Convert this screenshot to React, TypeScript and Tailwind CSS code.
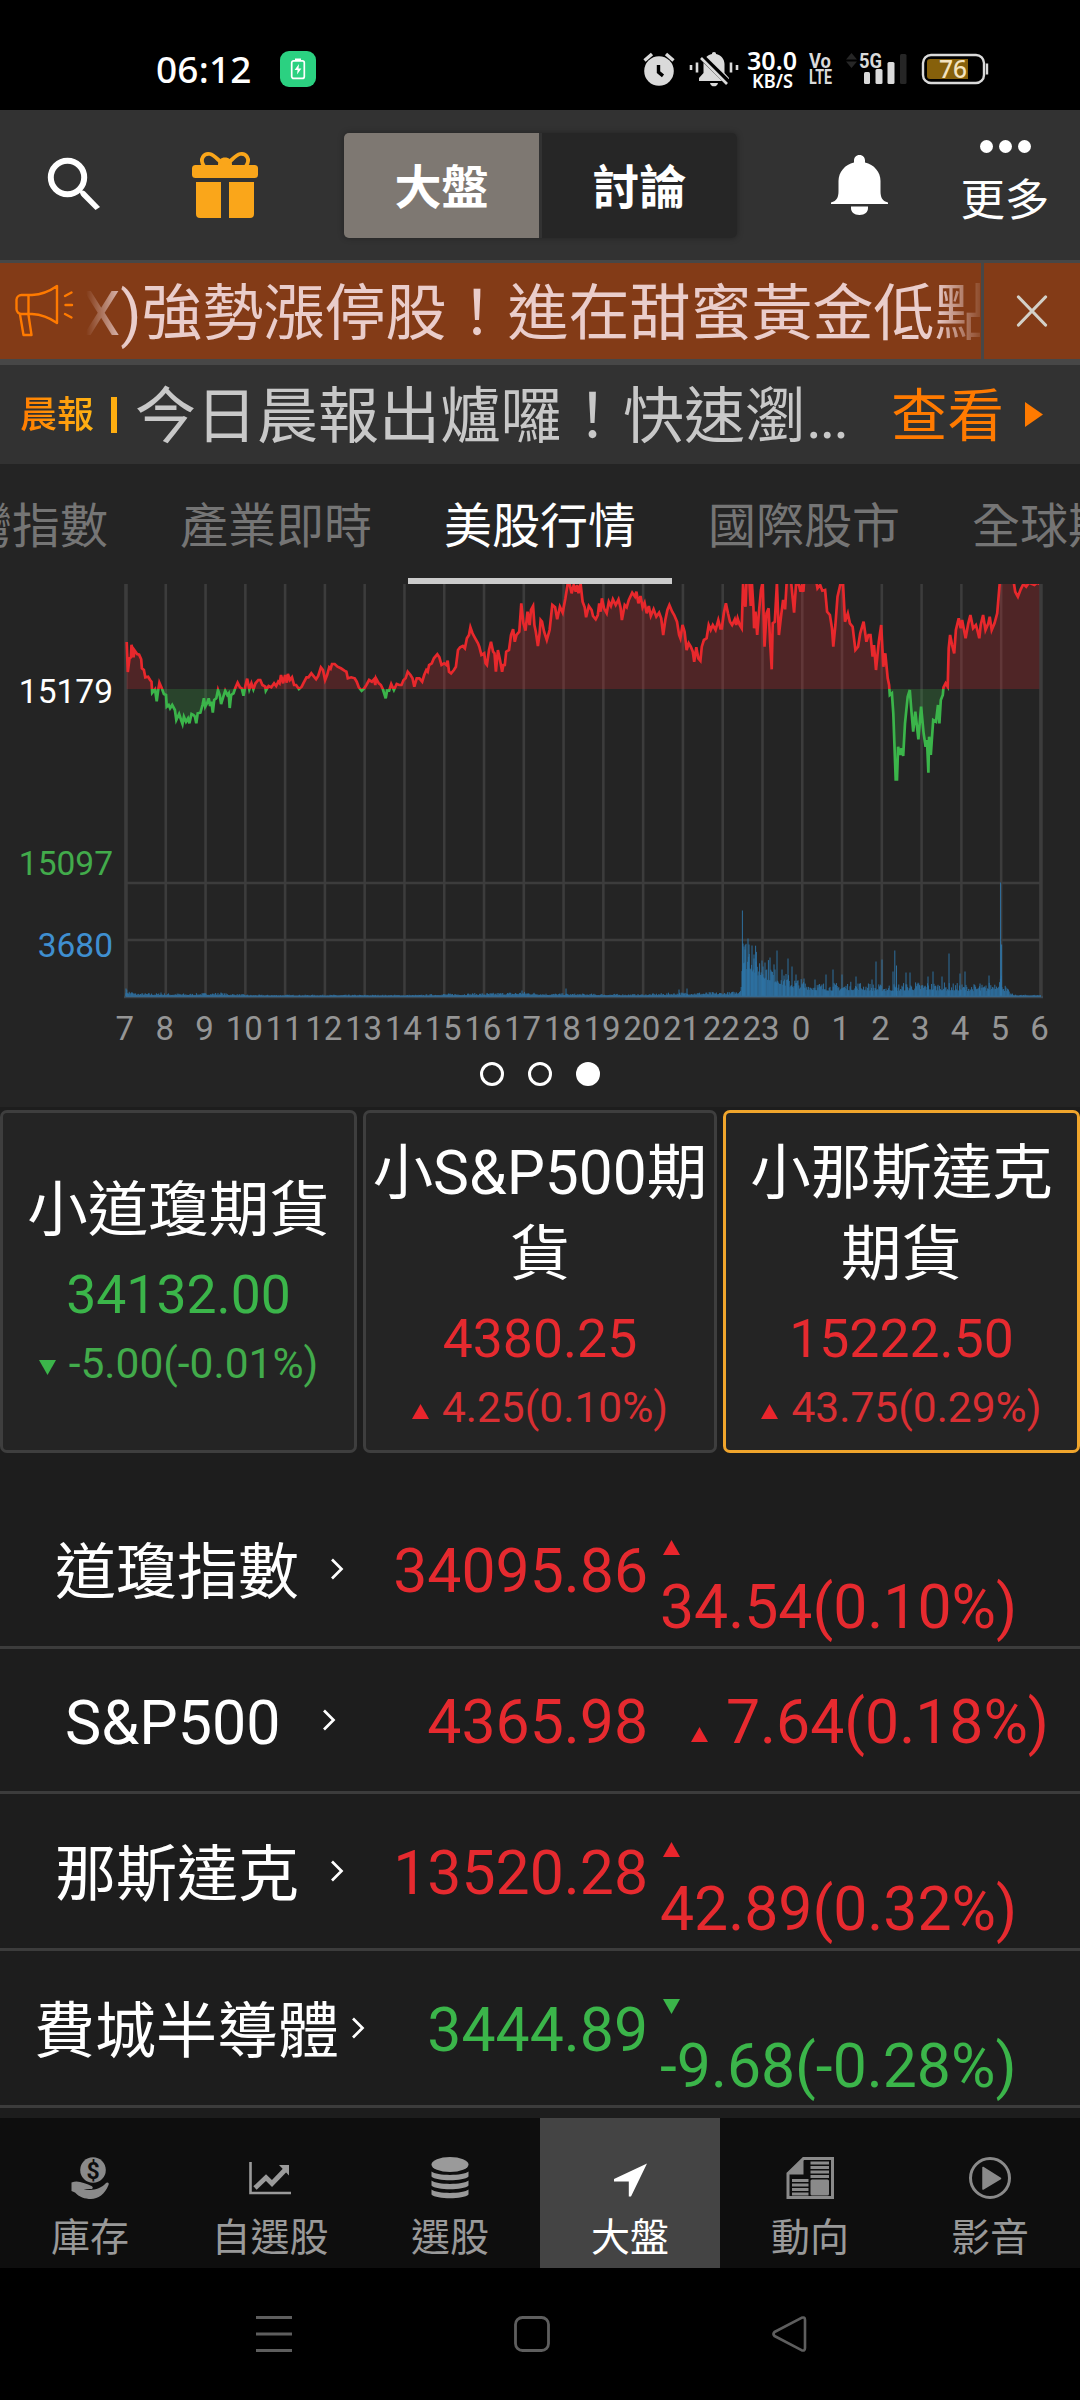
import React from "react";

type Dir = "up" | "down";

/* Price samples: alternating x, y on a fine grid (2.904 units per px across, 3 per px down). */
const PRICE_DAY =
  "368,216 371,306 376,265 380,262 382,224 388,262 390,240 398,252 404,254 410,268 412,295 418,300 422,322 430,320 436,330 440,335 442,368 450,358 455,394 459,362 463,338 470,355 476,372 482,375 484,410 490,405 494,415 500,405 508,420 512,450 520,432 526,450 530,462 534,440 540,455 546,445 550,460 556,432 562,435 566,440 570,460 574,430 582,428 588,405 592,385 596,410 602,398 606,385 610,408 614,395 618,428 622,390 628,385 633,360 638,375 642,402 648,382 654,362 660,375 664,370 667,414 671,375 678,370 683,355 690,338 697,352 702,355 707,377 712,350 718,326 724,358 730,340 736,358 742,340 750,330 756,330 762,345 770,350 772,362 780,348 788,352 796,340 802,348 808,335 812,340 816,315 822,340 828,315 833,338 836,312 842,330 848,322 854,345 860,345 868,357 876,350 882,338 890,322 896,322 904,310 912,320 918,328 924,318 932,292 938,300 944,330 950,315 956,292 960,296 964,282 972,282 980,290 990,295 1000,302 1006,305 1010,325 1020,322 1030,325 1036,335 1042,352 1050,362 1058,355 1064,345 1072,330 1080,335 1086,328 1090,345 1092,325 1100,340 1106,345 1112,358 1120,385 1124,362 1130,362 1136,342 1144,360 1152,342 1160,345 1166,345 1172,330 1178,325 1184,305 1192,315 1198,325 1203,350 1210,325 1218,325 1226,335 1232,315 1238,300 1242,305 1246,285 1254,280 1260,265 1270,253 1276,262 1282,285 1290,280 1296,285 1300,272 1304,305 1310,310 1318,300 1324,290 1330,240 1336,232 1344,228 1350,235 1356,205 1362,195 1366,172 1372,190 1380,205 1388,220 1392,230 1398,255 1406,250 1410,280 1414,285 1420,240 1426,215 1432,245 1436,250 1440,305 1446,240 1452,270 1458,305 1462,285 1466,285 1470,245 1478,240 1484,195 1490,178 1495,215 1500,195 1508,185 1514,100 1520,160 1526,182 1532,125 1538,165 1542,120 1548,108 1552,165 1556,185 1562,228 1567,190";
const PRICE_NIGHT =
  "2,150 6,155 12,185 20,210 28,180 36,105 44,112 50,148 58,110 66,128 74,85 80,45 86,42 92,70 98,45 104,65 108,45 112,70 118,42 124,95 130,112 134,142 142,108 150,120 154,138 162,148 168,135 172,100 176,125 180,85 186,115 194,130 200,95 206,108 212,88 220,105 228,88 234,112 238,150 246,105 252,112 258,90 268,68 276,80 280,65 286,100 292,78 298,112 304,98 310,130 316,108 322,138 330,118 338,140 346,128 352,145 358,195 364,150 370,120 376,105 384,125 390,135 398,155 404,195 408,205 414,165 420,185 426,240 432,220 438,230 444,245 448,275 454,232 460,265 466,272 470,230 476,210 484,205 490,165 496,180 502,165 510,180 518,150 524,175 528,175 534,130 540,100 546,130 552,155 558,165 566,148 570,165 574,145 580,165 586,175 590,40 593,95 597,110 600,25 608,30 612,108 615,30 620,110 622,175 626,125 631,195 636,125 642,60 647,35 652,230 658,130 664,115 668,210 673,298 676,160 682,155 688,40 694,195 700,140 706,90 712,118 717,30 724,30 730,42 738,128 744,40 752,45 757,65 760,50 765,65 768,20 800,20 806,55 814,45 820,62 828,60 834,125 842,135 848,175 852,230 858,165 864,80 872,45 880,40 886,155 894,130 900,160 908,170 916,240 924,230 930,190 940,155 948,215 954,195 960,195 966,260 970,225 976,300 984,215 991,165 997,290 1003,250 1010,325 1014,345 1016,375 1022,370 1026,430 1033,628 1037,628 1040,530 1046,555 1050,535 1055,558 1060,460 1068,380 1074,360 1078,415 1084,485 1090,425 1099,508 1107,410 1114,490 1120,530 1124,510 1128,608 1130,500 1135,555 1142,450 1150,455 1156,405 1160,460 1164,390 1170,375 1172,352 1178,340 1184,350 1187,235 1191,195 1197,225 1203,250 1208,180 1216,145 1222,175 1226,150 1236,205 1244,160 1250,135 1258,175 1266,165 1270,180 1276,205 1280,165 1287,135 1294,180 1302,160 1306,140 1312,180 1320,160 1328,130 1336,30 1375,30 1380,65 1388,80 1396,58 1404,42 1412,50 1420,38 1436,45 1444,38 1450,42";

const parse = (s: string, shift: number) =>
  s.split(" ").map((p) => {
    const [x, y] = p.split(",").map(Number);
    return [(x + shift) / 2.904, y / 3 - 14] as [number, number];
  });
const points = [...parse(PRICE_DAY, 0), ...parse(PRICE_NIGHT, 1568)];
const linePath = "M" + points.map(([x, y]) => `${x.toFixed(1)} ${y.toFixed(1)}`).join("L");
const BASE = 105;
const areaPath = `${linePath}L${points[points.length - 1][0].toFixed(1)} ${BASE}L${points[0][0].toFixed(1)} ${BASE}Z`;

/* Volume: typical height at a given x, plus single tall minutes. */
const LEVEL: [number, number][] = [
  [126, 5], [136, 2.4], [190, 2], [215, 2.6], [250, 1.2], [420, 1.2], [445, 2], [490, 2.4], [525, 3.2], [545, 2.2],
  [640, 1.6], [680, 2.8], [730, 3], [738, 4], [741, 8], [742.4, 42], [750, 42], [757, 32], [765, 27], [780, 19], [790, 14], [810, 10],
  [830, 9], [860, 10], [880, 8], [900, 9], [920, 10], [950, 9], [985, 8], [997, 12], [1001, 17], [1003, 10], [1010, 3], [1014, 1.2], [1041, 1.2],
];
const PEAKS: Record<string, number> = {
  126: 8, 161: 4, 221: 4, 522: 6, 566: 8, 679: 7, 687: 8, 742.4: 86, 743: 53, 744: 50, 745: 47, 748: 58, 749: 52, 752: 51, 754: 42, 756: 35, 762: 36,
  763: 30, 765: 34, 770: 39, 775: 27, 777: 46, 784: 21, 788: 38, 792: 30, 796: 22, 804: 18, 815: 17, 826: 22, 833: 27, 842: 22, 856: 20, 872: 17,
  876: 35, 882: 37, 893: 25, 894.8: 46, 896.5: 31, 906: 24, 910: 24, 928: 20, 933: 25, 942: 20, 949: 43, 960: 23, 965: 25, 980: 13, 989: 21, 1000.6: 114, 1001.6: 52,
};
const levelAt = (x: number) => {
  for (let i = 1; i < LEVEL.length; i++)
    if (x <= LEVEL[i][0]) {
      const [x0, y0] = LEVEL[i - 1];
      const [x1, y1] = LEVEL[i];
      return y0 + ((y1 - y0) * (x - x0)) / (x1 - x0 || 1);
    }
  return 1;
};
const volumePath = (() => {
  let seed = 7;
  let d = "";
  for (let x = 126; x < 1041; x += 0.8) {
    seed = (seed * 16807) % 2147483647;
    const r = seed / 2147483647;
    const h = levelAt(x) * (0.65 + 0.9 * r * r);
    d += `M${x.toFixed(1)} 412.5v${(-h).toFixed(1)}`;
  }
  for (const k of Object.keys(PEAKS)) d += `M${k} 412.5v${-PEAKS[k]}`;
  return d;
})();

const HOURS = ["7", "8", "9", "10", "11", "12", "13", "14", "15", "16", "17", "18", "19", "20", "21", "22", "23", "0", "1", "2", "3", "4", "5", "6"];

function Chart() {
  return (
    <section className="h-[523px] bg-[#242424]">
      <div className="flex h-[416px]">
        <div className="flex w-[113px] shrink-0 flex-col items-end text-[33.5px] leading-[34px]">
          <span className="mt-[91px] text-white">15179</span>
          <span className="mt-[138px] text-[#42ab4b]">15097</span>
          <span className="mt-[48px] text-[#3f8fd0]">3680</span>
        </div>
        <svg className="block shrink-0" width="967" height="418" viewBox="113 0 967 418">
          <defs>
            <clipPath id="above"><rect x="0" y="0" width="1080" height={BASE} /></clipPath>
            <clipPath id="below"><rect x="0" y={BASE} width="1080" height="200" /></clipPath>
          </defs>
          <g stroke="#3c3c3c" strokeWidth="2.6">
            {HOURS.map((_, i) => (
              <line key={i} x1={126 + i * 39.78} x2={126 + i * 39.78} y1="0" y2="414" strokeWidth={i === 0 || i === 23 ? 3.6 : 2.6} />
            ))}
            <line x1="125" x2="1042" y1="299" y2="299" />
            <line x1="125" x2="1042" y1="356" y2="356" />
            <line x1="124" x2="1043" y1="413" y2="413" stroke="#3a4650" />
          </g>
          <path d={volumePath} stroke="#2f75a8" strokeWidth="1" strokeOpacity="0.92" />
          <path d="M126 412.4H1041" stroke="#35688f" strokeWidth="1.2" />
          <g clipPath="url(#above)">
            <path d={areaPath} fill="#e8282c" fillOpacity="0.22" />
            <path d={linePath} fill="none" stroke="#e8282c" strokeWidth="2.7" />
          </g>
          <g clipPath="url(#below)">
            <path d={areaPath} fill="#3bb54a" fillOpacity="0.22" />
            <path d={linePath} fill="none" stroke="#3bb54a" strokeWidth="2.7" />
          </g>
        </svg>
      </div>
      <div className="ml-[105px] mt-[12px] flex h-[34px] text-[33px] leading-[34px] text-[#959595]">
        {HOURS.map((h) => (
          <span key={h} className="flex w-[39.78px] shrink-0 justify-center">{h}</span>
        ))}
      </div>
      <div className="mt-[16px] flex justify-center gap-[24px]">
        <span className="size-[24px] rounded-full border-[3px] border-white" />
        <span className="size-[24px] rounded-full border-[3px] border-white" />
        <span className="size-[24px] rounded-full bg-white" />
      </div>
    </section>
  );
}

function Tri({ dir, className = "" }: { dir: Dir; className?: string }) {
  return (
    <svg className={"block shrink-0 " + className} width="17" height="15" viewBox="0 0 17 15">
      <path d={dir === "up" ? "M0 15 8.5 0 17 15Z" : "M0 0H17L8.5 15Z"} fill={dir === "up" ? "#ea252c" : "#3bb54a"} />
    </svg>
  );
}

function StatusBar() {
  return (
    <div className="flex h-[110px] items-start bg-black text-white">
      <span className="ml-[156px] mt-[49px] w-[97px] font-['Noto_Sans'] text-[37px] font-medium leading-[40px] tracking-[0.2px]">06:12</span>
      <span className="ml-[27px] mt-[51px] flex size-[36px] items-center justify-center rounded-[9px] bg-[#2bd181]">
        <svg width="16" height="22" viewBox="0 0 16 22">
          <rect x="1.7" y="2.8" width="12.6" height="17.6" rx="2" fill="none" stroke="#fff" strokeWidth="1.7" />
          <path d="M5 .6h6v2H5zM9 6 4.6 12H7.6L7 16.4 11.4 10.4H8.5Z" fill="#fff" />
        </svg>
      </span>
      <svg className="ml-[326px] mt-[50px]" width="34" height="38" viewBox="0 0 34 38">
        <circle cx="17" cy="21" r="14.8" fill="#dadada" />
        <path d="M2.5 10.5 10 4M31.5 10.5 24 4" stroke="#dadada" strokeWidth="3.4" />
        <path d="M16.5 15v7.2l4.5 3.6" fill="none" stroke="#000" strokeWidth="3.4" />
      </svg>
      <svg className="ml-[13px] mt-[50px]" width="50" height="38" viewBox="0 0 50 38">
        <path d="M25 2c1.500 0 2 .8 2 2 5 1 8.500 5 8.500 10v9l4.500 5v3H10v-3l4.500-5v-9C14.500 9 18 5 23 4c0-1.200.5-2 2-2ZM21 33h8c-.5 2.500-2 3.300-4 3.300s-3.500-.8-4-3.300Z" fill="#dadada" />
        <path d="M14 8 39.500 33" stroke="#000" strokeWidth="6" />
        <path d="M12 8 38 34" stroke="#dadada" strokeWidth="2.600" />
        <path d="M2 15v5M8 12.500v10M42 12.500v10M48 15v5" stroke="#dadada" strokeWidth="2.600" />
      </svg>
      <svg className="ml-[7px] mt-[48px]" width="52" height="46" viewBox="0 0 52 46" fill="#fff" fontFamily="Noto Sans" fontWeight="600">
        <text x="1" y="21.500" fontSize="25" textLength="50" lengthAdjust="spacingAndGlyphs">30.0</text>
        <text x="6" y="39.500" fontSize="19" textLength="41" lengthAdjust="spacingAndGlyphs">KB/S</text>
      </svg>
      <svg className="ml-[10px] mt-[50px]" width="26" height="38" viewBox="0 0 26 38" fill="#dadada" fontFamily="Roboto" fontWeight="700" fontSize="20">
        <text x="1" y="18" textLength="22" lengthAdjust="spacingAndGlyphs">Vo</text>
        <text x="1" y="33.500" textLength="23" lengthAdjust="spacingAndGlyphs">LTE</text>
      </svg>
      <svg className="ml-[12px] mt-[50px]" width="64" height="36" viewBox="0 0 64 36">
        <path d="M0 9.500 5.500 3l5.500 6.500ZM0 11.500 5.500 18l5.500-6.500Z" fill="#262626" />
        <text x="13" y="17.500" fontFamily="Roboto" fontWeight="700" fontSize="20" textLength="23" lengthAdjust="spacingAndGlyphs" fill="#dadada">5G</text>
        <rect x="18" y="22" width="6" height="12" rx="1.500" fill="#dadada" />
        <rect x="29.500" y="19" width="7" height="15" rx="1.500" fill="#dadada" />
        <rect x="41.500" y="12" width="7" height="22" rx="1.500" fill="#dadada" />
        <rect x="54" y="4" width="6.500" height="30" rx="1.500" fill="#262626" />
      </svg>
      <svg className="ml-[11px] mt-[52px]" width="70" height="34" viewBox="0 0 70 34">
        <rect x="2" y="3" width="61" height="28" rx="8" fill="none" stroke="#dadada" strokeWidth="2.400" />
        <path d="M9 7H47V27H9a3 3 0 0 1-3-3V10a3 3 0 0 1 3-3Z" fill="#86600b" />
        <path d="M66 11.500v11" stroke="#dadada" strokeWidth="2.400" />
        <text x="18" y="26" fontFamily="Noto Sans" fontWeight="500" fontSize="24.500" textLength="28" fill="#f3e3c0">76</text>
      </svg>
    </div>
  );
}

function Header() {
  return (
    <div className="flex h-[150px] items-start bg-[#323232]">
      <svg className="ml-[44px] mt-[44px]" width="60" height="60" viewBox="0 0 60 60">
        <circle cx="23.500" cy="23.500" r="16.700" fill="none" stroke="#fff" strokeWidth="6" />
        <path d="M36 37.500C37.500 36 40 36.500 41.500 38L56 53 51.500 56 38 42.500C36.500 41 35.800 39 36 37.500Z" fill="#fff" />
      </svg>
      <svg className="ml-[86px] mt-[40px]" width="70" height="70" viewBox="0 0 70 70">
        <g fill="#faa61a">
          <rect x="2" y="15" width="66" height="13" rx="3.500" />
          <path d="M6 32H31V68H10a4 4 0 0 1-4-4ZM39 32H64V64a4 4 0 0 1-4 4H39Z" />
          <path d="M28 15c0-5 3-7.500 7-7.500s7 2.500 7 7.500Z" />
        </g>
        <path d="M14 16C9 9 14 2.800 20 4c4 .8 8 6 12 9M56 16c5-7 0-13.200-6-12-4 .8-8 6-12 9" fill="none" stroke="#faa61a" strokeWidth="3.800" />
      </svg>
      <div className="ml-[84px] mt-[23px] flex gap-[3px] rounded-[5px] text-[47px] font-bold leading-[109px] text-white shadow-[0_0_6px_rgba(0,0,0,0.3)]">
        <span className="h-[105px] w-[195px] rounded-l-[5px] bg-[#7e7872] text-center">大盤</span>
        <span className="h-[105px] w-[195px] rounded-r-[5px] bg-[#262626] text-center">討論</span>
      </div>
      <svg className="ml-[93px] mt-[43px]" width="60" height="64" viewBox="0 0 60 64">
        <path d="M29.500 2c3.500 0 5.500 2.500 5.500 5.500v2c9 2 15.500 9.500 15.500 18.500V38c0 6 1.500 10 7.500 11.500V51H1v-1.500C7 48 8.500 44 8.500 38V28C8.500 19 15 11.500 24 9.500v-2C24 4.500 26 2 29.500 2ZM21 53.500H38V55c0 4-3 7-8.500 7S21 59 21 55Z" fill="#fff" />
      </svg>
      <div className="ml-[70px] flex w-[90px] flex-col items-center pt-[30px] text-white">
        <div className="flex gap-[6px]">
          <span className="size-[13px] rounded-full bg-white" />
          <span className="size-[13px] rounded-full bg-white" />
          <span className="size-[13px] rounded-full bg-white" />
        </div>
        <span className="mt-[18px] whitespace-nowrap text-[44.500px] leading-[60px]">更多</span>
      </div>
    </div>
  );
}

function Banner() {
  return (
    <div className="flex h-[105px] border-b-[6px] border-t-[3px] border-[#474747] bg-[#833b17]">
      <svg className="ml-[13px] mt-[20px] shrink-0" width="62" height="56" viewBox="0 0 62 56" fill="none" stroke="#ff7a00" strokeWidth="2.400" strokeLinejoin="round" strokeLinecap="round">
        <path d="M3.500 16.500A5 5 0 0 1 8.500 12H19C29 11.500 37 8 44 3V40C37 35 29 31.500 19 31H8.500a5 5 0 0 1-5-5ZM15.500 12V31M7 31.500 10.500 52h8L15.500 32M52 13l6.500-3.500M52.500 22H59M52 31l6.500 3.500" />
      </svg>
      <div className="ml-[11px] w-[894px] overflow-hidden whitespace-nowrap text-[61px] leading-[103px] text-[#eacdcb] [mask-image:linear-gradient(to_right,transparent_0px,black_40px,black_850px,transparent_900px)]">
        <span className="ml-[-4px]">X)強勢漲停股！進在甜蜜黃金低點</span>
      </div>
      <div className="ml-[1px] flex w-[99px] items-center border-l-[3px] border-[#474747] pl-[32px]">
        <svg width="32" height="32" viewBox="0 0 32 32">
          <path d="M2.500 2 29.500 30M29.500 2 2.500 30" stroke="#d3d0c8" strokeWidth="3.200" strokeLinecap="round" />
        </svg>
      </div>
    </div>
  );
}

function MorningNews() {
  return (
    <div className="flex h-[99px] items-center whitespace-nowrap bg-[#323232]">
      <span className="ml-[20px] mt-[2px] bg-linear-to-r from-[#ff7a00] to-[#ffb414] bg-clip-text text-[37px] font-medium leading-[60px] text-transparent">晨報</span>
      <span className="ml-[17px] h-[36px] w-[6px] bg-[#ffae10]" />
      <span className="ml-[18px] mt-[6px] w-[720px] text-[61px] leading-[93px] text-[#c8c8c8]">今日晨報出爐囉！快速瀏<span className="tracking-[-2.500px]">...</span></span>
      <span className="ml-[36px] mt-[5px] text-[56.500px] leading-[93px] text-[#ff7a00]">查看</span>
      <svg className="ml-[21px]" width="18" height="25" viewBox="0 0 18 25"><path d="M0 0 18 12.500 0 25Z" fill="#ff7a00" /></svg>
    </div>
  );
}

const TABS = ["台灣指數", "產業即時", "美股行情", "國際股市", "全球期貨"];

function Tabs() {
  return (
    <div className="flex h-[120px] justify-center overflow-hidden bg-[#242424]">
      {TABS.map((t, i) => (
        <span
          key={t}
          className={
            "h-[120px] w-[264px] shrink-0 text-center text-[48px] leading-[125px] " +
            (i === 2 ? "border-b-[6px] border-[#cbcbcb] text-white" : "text-[#757575]")
          }
        >
          {t}
        </span>
      ))}
    </div>
  );
}

type Future = { title: string[]; price: string; change: string; dir: Dir; box: string };
const FUTURES: Future[] = [
  { title: ["小道瓊期貨"], price: "34132.00", change: "-5.00(-0.01%)", dir: "down", box: "w-[357px] border-[#3e3e3e] pt-[57px]" },
  { title: ["小S&P500期", "貨"], price: "4380.25", change: "4.25(0.10%)", dir: "up", box: "w-[354px] border-[#3e3e3e] pt-[20px]" },
  { title: ["小那斯達克", "期貨"], price: "15222.50", change: "43.75(0.29%)", dir: "up", box: "w-[357px] border-[#f0a52c] pt-[20px]" },
];

function FutureCard({ f }: { f: Future }) {
  return (
    <div className={"flex h-[343px] shrink-0 flex-col items-center rounded-[7px] border-[3px] bg-[#242424] " + f.box}>
      {f.title.map((l) => (
        <span key={l} className="h-[81px] whitespace-nowrap text-[60.500px] leading-[81px] text-white">{l}</span>
      ))}
      <span className={"mt-[9px] text-[53.500px] leading-[70px] " + (f.dir === "up" ? "text-[#e62a2f]" : "text-[#3bb54a]")}>{f.price}</span>
      <span className={"flex items-center gap-[13px] text-[42.500px] leading-[67px] " + (f.dir === "up" ? "text-[#d92f33]" : "text-[#42ab4b]")}>
        <Tri dir={f.dir} className="mt-[7px]" />
        {f.change}
      </span>
    </div>
  );
}

type Row = { name: string; price: string; change: string; dir: Dir; inset: string; gap: string; stacked: boolean };
const ROWS: Row[] = [
  { name: "道瓊指數", price: "34095.86", change: "34.54(0.10%)", dir: "up", inset: "pl-[55px]", gap: "ml-[31px]", stacked: true },
  { name: "S&P500", price: "4365.98", change: "7.64(0.18%)", dir: "up", inset: "pl-[65px]", gap: "ml-[41px]", stacked: false },
  { name: "那斯達克", price: "13520.28", change: "42.89(0.32%)", dir: "up", inset: "pl-[55px]", gap: "ml-[31px]", stacked: true },
  { name: "費城半導體", price: "3444.89", change: "-9.68(-0.28%)", dir: "down", inset: "pl-[34px]", gap: "ml-[12px]", stacked: true },
];

function IndexRow({ r }: { r: Row }) {
  return (
    <div
      className={
        "flex items-start whitespace-nowrap border-b-[3px] border-[#3c3c3c] text-[60.700px] " +
        (r.stacked ? "h-[157px] " : "h-[145px] ") +
        (r.dir === "up" ? "text-[#e62a2f]" : "text-[#3bb54a]")
      }
    >
      <div className={"flex h-full w-[375px] shrink-0 items-center text-[61px] text-white " + r.inset}>
        <span className={"leading-[100px] " + (r.stacked ? "mt-[8px]" : "mt-[5px]")}>{r.name}</span>
        <svg className={"shrink-0 " + r.gap} width="15" height="24" viewBox="0 0 15 24">
          <path d="M2 2.500 11.500 12 2 21.500" fill="none" stroke="#fff" strokeWidth="2.700" />
        </svg>
      </div>
      <div className="flex h-full w-[273px] shrink-0 items-center justify-end pt-[5px] leading-[100px]">{r.price}</div>
      {r.stacked ? (
        <div className="ml-[12px] flex flex-col pt-[48px]">
          <Tri dir={r.dir} className="ml-[3px]" />
          <span className="mt-[17px] leading-[72px]">{r.change}</span>
        </div>
      ) : (
        <div className="ml-[43px] flex h-full items-center gap-[18px] pt-[5px] leading-[100px]">
          <Tri dir={r.dir} className="mt-[23px]" />
          {r.change}
        </div>
      )}
    </div>
  );
}

const ICONS: Record<string, React.ReactNode> = {
  庫存: (
    <svg width="48" height="44" viewBox="0 0 48 44" fill="#8a8a8a">
      <circle cx="27" cy="14" r="12.800" />
      <text x="27" y="22.500" textAnchor="middle" fontFamily="Roboto" fontWeight="700" fontSize="23" fill="#0e0e0e">$</text>
      <path d="M5.500 26.500C12 24 18 27 25.500 30c2 1 1.500 3-.5 3h-7.500c8 2.500 17 0 22-5.500 2-2 4-.5 3 1.500C39 38 32 43 25 43c-6 0-12-2-16-6.500L5.500 35Z" />
    </svg>
  ),
  自選股: (
    <svg width="48" height="44" viewBox="0 0 48 44" fill="none" stroke="#9a9a9a">
      <path d="M4.500 6V37H45" strokeWidth="2.600" />
      <path d="M9 32 20 21.500 26 27.500 39 14" strokeWidth="4.800" />
      <path d="M33 9H43V19.500Z" fill="#9a9a9a" stroke="none" />
    </svg>
  ),
  選股: (
    <svg width="48" height="44" viewBox="0 0 48 44" fill="#9a9a9a">
      <ellipse cx="24" cy="8.500" rx="18.500" ry="7.500" />
      <path d="M5.500 15.500c5 4.500 32 4.500 37 0v5c-5 5-32 5-37 0ZM5.500 24.500c5 4.500 32 4.500 37 0v5c-5 5-32 5-37 0ZM5.500 33.500c5 4.500 32 4.500 37 0v5c-5 5-32 5-37 0Z" />
    </svg>
  ),
  大盤: (
    <svg width="48" height="44" viewBox="0 0 48 44"><path d="M41 7.500 25 40.500H22.800V25.500H8V23Z" fill="#fff" /></svg>
  ),
  動向: (
    <svg width="48" height="44" viewBox="0 0 48 44" fill="none" stroke="#8a8a8a" strokeWidth="3">
      <path d="M2 17.500 17.500 2.500H46.500V41.500H2Z" />
      <path d="M2 17.500 17.500 2.500V18.500H2Z" fill="#8a8a8a" stroke="none" />
      <path d="M24.500 7H43M24.500 11.500H43M24.500 16H43M24.500 20.500H43M6 24.500H22.500M6 29H22.500M6 33.500H22.500M6 38H22.500" strokeWidth="2.800" />
      <rect x="24.500" y="23.500" width="18.500" height="16" rx="1.500" fill="#8a8a8a" stroke="none" />
    </svg>
  ),
  影音: (
    <svg width="48" height="44" viewBox="0 0 48 44">
      <circle cx="24" cy="22" r="19.500" fill="none" stroke="#8a8a8a" strokeWidth="3" />
      <path d="M17 11.500 34.500 22.500 17 33Z" fill="#8a8a8a" stroke="#8a8a8a" strokeWidth="1.500" strokeLinejoin="round" />
    </svg>
  ),
};

function BottomNav() {
  return (
    <nav className="grid h-[150px] shrink-0 grid-cols-6 bg-[#0e0e0e]">
      {Object.keys(ICONS).map((label) => (
        <div
          key={label}
          className={"flex flex-col items-center pt-[38px] text-[39px] leading-[58px] " + (label === "大盤" ? "bg-[#444444] text-white" : "text-[#999999]")}
        >
          {ICONS[label]}
          <span className="mt-[9px]">{label}</span>
        </div>
      ))}
    </nav>
  );
}

function SystemNav() {
  return (
    <div className="flex flex-1 items-start bg-black pt-[46px]">
      <svg className="ml-[254px]" width="40" height="40" viewBox="0 0 40 40"><path d="M2 3.500H38M2 20H38M2 36.500H38" stroke="#5e5e5e" strokeWidth="3" /></svg>
      <svg className="ml-[218px]" width="40" height="40" viewBox="0 0 40 40"><rect x="3.500" y="3.500" width="33" height="33" rx="7" fill="none" stroke="#5e5e5e" strokeWidth="2.800" /></svg>
      <svg className="ml-[218px]" width="40" height="40" viewBox="0 0 40 40">
        <path d="M4.500 18 31.500 3.800Q35 2.500 35 6V34Q35 37.500 31.500 36.200L4.500 22Q2.500 20 4.500 18Z" fill="none" stroke="#5e5e5e" strokeWidth="2.600" strokeLinejoin="round" />
      </svg>
    </div>
  );
}

export default function App() {
  return (
    <div className="flex h-[2400px] w-[1080px] flex-col overflow-hidden bg-[#1d1d1d] font-['Roboto','Noto_Sans_CJK_TC',sans-serif]">
      <StatusBar />
      <Header />
      <Banner />
      <MorningNews />
      <Tabs />
      <Chart />
      <div className="mt-[3px] flex justify-between">
        {FUTURES.map((f) => (
          <FutureCard key={f.price} f={f} />
        ))}
      </div>
      <div className="mt-[39px] h-[626px] shrink-0">
        {ROWS.map((r) => (
          <IndexRow key={r.name} r={r} />
        ))}
      </div>
      <BottomNav />
      <SystemNav />
    </div>
  );
}
